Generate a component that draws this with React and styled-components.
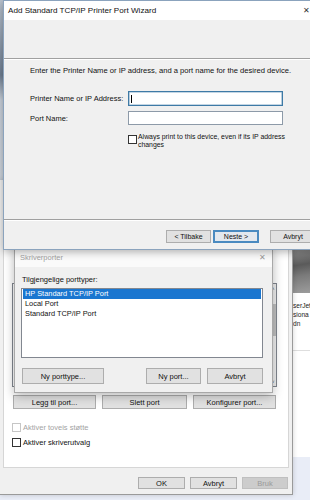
import React from "react";
import styled, { createGlobalStyle, css } from "styled-components";

const Global = createGlobalStyle`
  html, body { margin: 0; padding: 0; }
  body {
    width: 310px;
    height: 500px;
    overflow: hidden;
    font-family: "Liberation Sans", Arial, sans-serif;
    color: #111;
  }
  * { box-sizing: border-box; }
`;

const Desktop = styled.div`
  position: relative;
  width: 310px;
  height: 500px;
  overflow: hidden;
  background: #fff;
`;

/* ---------- background web page ---------- */
const WebPage = styled.div`
  position: absolute;
  inset: 0;
  display: flex;
  flex-direction: column;
`;
const TopBand = styled.div`
  height: 250px;
  background: linear-gradient(180deg, #b9c3cf 0%, #6f7f93 30%, #c8d0da 40%, #d2d8df 100%);
`;
const PhotoRow = styled.div`
  height: 43px;
  display: flex;
  justify-content: flex-end;
`;
const Photo = styled.div`
  width: 17px;
  background: linear-gradient(170deg, #8e8e8e 0%, #5a5a5a 35%, #7b7b7b 60%, #9c9c9c 100%);
`;
const Caption = styled.div`
  margin-top: 8px;
  padding-left: 293px;
  font-size: 6.6px;
  line-height: 9px;
  white-space: nowrap;
  color: #222;
`;
const Rule = styled.div`
  margin-left: 293px;
  margin-top: 22px;
  border-top: 1px solid #dedede;
`;
const Filler = styled.div`
  flex: 1;
`;
const Footer = styled.div`
  height: 43px;
  background: #e9edf7;
`;

/* ---------- shared controls ---------- */
const Button = styled.div`
  display: flex;
  align-items: center;
  justify-content: center;
  width: ${(p) => p.$w}px;
  height: ${(p) => p.$h || 14}px;
  background: ${(p) => (p.$disabled ? "#cccccc" : "#e1e1e1")};
  border: 1px solid ${(p) => (p.$disabled ? "#bfbfbf" : "#adadad")};
  color: ${(p) => (p.$disabled ? "#9a9a9a" : "#111")};
  font-size: ${(p) => p.$fs || 7.5}px;
  white-space: nowrap;
  ${(p) =>
    p.$default &&
    css`
      border: 2px solid #4a8ac0;
      background: #e3e8ee;
    `}
`;

const Box = styled.span`
  display: inline-block;
  flex: none;
  width: 9px;
  height: 9px;
  background: #fff;
  border: 1px solid ${(p) => (p.$disabled ? "#c6c6c6" : "#333")};
`;

/* ---------- properties window (back) ---------- */
const PropsWindow = styled.div`
  position: absolute;
  left: 0;
  top: 180px;
  width: 293px;
  height: 315px;
  background: #f0f0f0;
  border-right: 1px solid #9a9a9a;
  border-bottom: 1px solid #9a9a9a;
  box-shadow: 0 0 5px rgba(0, 0, 0, 0.18);
  padding: 0 3px 0 3px;
  display: flex;
  flex-direction: column;
`;
const TabPage = styled.div`
  height: 288px;
  background: #fff;
  border: 1px solid #d6d6d6;
  padding: 0 11px 0 8px;
  display: flex;
  flex-direction: column;
`;
const PortsList = styled.div`
  margin-top: 102px;
  height: 104px;
  border: 1px solid #828790;
  background: #fff;
  display: flex;
  justify-content: flex-end;
`;
const ScrollBar = styled.div`
  width: 6px;
  background: #f0f0f0;
  display: flex;
  flex-direction: column;
  align-items: center;
  font-size: 5px;
  color: #555;
`;
const Arrow = styled.div`
  height: 9px;
  display: flex;
  align-items: center;
`;
const Thumb = styled.div`
  width: 5px;
  height: 32px;
  margin-top: 11px;
  background: #c2c2c2;
`;
const ScrollGap = styled.div`
  flex: 1;
`;
const PortButtons = styled.div`
  margin-top: 8px;
  margin-left: 1px;
  display: flex;
  gap: 6px;
`;
const CheckRow = styled.div`
  display: flex;
  align-items: center;
  gap: 2px;
  height: 9px;
  margin-top: ${(p) => p.$mt}px;
  font-size: 7.5px;
  color: ${(p) => (p.$disabled ? "#a3a3a3" : "#111")};
  white-space: nowrap;
`;
const DialogButtons = styled.div`
  margin-top: 9px;
  padding-right: 1px;
  display: flex;
  justify-content: flex-end;
  gap: 5px;
`;

/* ---------- Skriverporter dialog ---------- */
const PortsDialog = styled.div`
  position: absolute;
  left: 14px;
  top: 246px;
  width: 259px;
  height: 147px;
  background: #f0f0f0;
  border: 1px solid #a8a8a8;
  box-shadow: 0 3px 10px rgba(0, 0, 0, 0.28);
  display: flex;
  flex-direction: column;
`;
const DialogTitle = styled.div`
  height: 20px;
  flex: none;
  background: #fafafa;
  display: flex;
  align-items: center;
  justify-content: space-between;
  padding: 0 6px 0 5px;
  font-size: 7.5px;
  color: #a2a2a2;
`;
const CloseGlyph = styled.span`
  font-size: ${(p) => p.$fs || 8}px;
  color: ${(p) => p.$c || "#9a9a9a"};
`;
const DialogBody = styled.div`
  flex: 1;
  padding: 0 9px 0 6px;
  display: flex;
  flex-direction: column;
`;
const Label = styled.div`
  margin-top: 8px;
  height: 9px;
  display: flex;
  align-items: center;
  font-size: 7.5px;
  padding-left: 1px;
`;
const TypeList = styled.div`
  margin-top: 4px;
  height: 70px;
  border: 1px solid #828790;
  background: #fff;
  padding: 0 1px;
`;
const TypeItem = styled.div`
  height: 9.7px;
  display: flex;
  align-items: center;
  padding-left: 2px;
  font-size: 7.4px;
  white-space: nowrap;
  ${(p) =>
    p.$selected &&
    css`
      background: #1a76d0;
      color: #fff;
    `}
`;
const TypeButtons = styled.div`
  margin-top: 10px;
  display: flex;
  gap: 6px;
  padding-left: 1px;
`;
const Spacer = styled.div`
  flex: 1;
`;

/* ---------- Wizard (front) ---------- */
const Wizard = styled.div`
  position: absolute;
  left: 3px;
  top: 0;
  width: 318px;
  height: 250px;
  background: #f0f0f0;
  border: 1px solid #8ba3bd;
  box-shadow: 0 2px 8px rgba(0, 0, 0, 0.3);
  display: flex;
  flex-direction: column;
`;
const WizardTitle = styled.div`
  height: 19px;
  flex: none;
  background: #fff;
  display: flex;
  align-items: center;
  justify-content: space-between;
  padding: 0 10px 0 4px;
  font-size: 8.1px;
  color: #111;
`;
const WizardHeader = styled.div`
  height: 39px;
  flex: none;
  border-bottom: 1px solid #a0a0a0;
  box-shadow: 0 1px 0 #fff;
`;
const WizardBody = styled.div`
  flex: 1;
  padding: 6px 0 0 26px;
  display: flex;
  flex-direction: column;
  font-size: 7.5px;
`;
const Intro = styled.div`
  height: 10px;
  display: flex;
  align-items: center;
  white-space: nowrap;
  font-size: 7.6px;
`;
const Form = styled.div`
  margin-top: 16px;
  display: grid;
  grid-template-columns: 98px 155px;
  row-gap: 5px;
  align-items: center;
`;
const FieldLabel = styled.div`
  white-space: nowrap;
`;
const Input = styled.div`
  height: ${(p) => p.$h}px;
  background: #fff;
  border: 1px solid ${(p) => (p.$focused ? "#3e7aa6" : "#8d9aa8")};
  display: flex;
  align-items: center;
  padding-left: 2px;
  ${(p) =>
    p.$focused &&
    css`
      box-shadow: inset 0 0 0 0.6px rgba(62, 122, 166, 0.6);
    `}
`;
const Caret = styled.span`
  width: 1px;
  height: 8px;
  background: #000;
`;
const AlwaysRow = styled.div`
  margin: 10px 0 0 98px;
  display: flex;
  align-items: flex-start;
  gap: 1px;
`;
const AlwaysText = styled.div`
  line-height: 8px;
  margin-top: -2px;
  font-size: 6.9px;
`;
const WizardFooter = styled.div`
  height: 30px;
  flex: none;
  border-top: 1px solid #a0a0a0;
  box-shadow: inset 0 1px 0 #fff;
  padding: 10px 0 0 162px;
  display: flex;
  gap: 2px;
`;
const FooterGap = styled.div`
  width: 7px;
`;

export default function App() {
  return (
    <>
      <Global />
      <Desktop>
        <WebPage>
          <TopBand />
          <PhotoRow>
            <Photo />
          </PhotoRow>
          <Caption>
            serJet
            <br />
            siona
            <br />
            dn
          </Caption>
          <Rule />
          <Filler />
          <Footer />
        </WebPage>

        <PropsWindow>
          <TabPage>
            <PortsList>
              <ScrollBar>
                <Arrow>˄</Arrow>
                <Thumb />
                <ScrollGap />
                <Arrow>˅</Arrow>
              </ScrollBar>
            </PortsList>
            <PortButtons>
              <Button $w={83}>Legg til port...</Button>
              <Button $w={85}>Slett port</Button>
              <Button $w={83}>Konfigurer port...</Button>
            </PortButtons>
            <CheckRow $mt={14} $disabled>
              <Box $disabled />
              Aktiver toveis støtte
            </CheckRow>
            <CheckRow $mt={6}>
              <Box />
              Aktiver skriverutvalg
            </CheckRow>
          </TabPage>
          <DialogButtons>
            <Button $w={47} $h={12}>OK</Button>
            <Button $w={47} $h={12}>Avbryt</Button>
            <Button $w={46} $h={12} $disabled>Bruk</Button>
          </DialogButtons>
        </PropsWindow>

        <PortsDialog>
          <DialogTitle>
            <span>Skriverporter</span>
            <CloseGlyph>✕</CloseGlyph>
          </DialogTitle>
          <DialogBody>
            <Label>Tilgjengelige porttyper:</Label>
            <TypeList>
              <TypeItem $selected>HP Standard TCP/IP Port</TypeItem>
              <TypeItem>Local Port</TypeItem>
              <TypeItem>Standard TCP/IP Port</TypeItem>
            </TypeList>
            <TypeButtons>
              <Button $w={82} $h={16}>Ny porttype...</Button>
              <Spacer />
              <Button $w={55} $h={16}>Ny port...</Button>
              <Button $w={56} $h={16}>Avbryt</Button>
            </TypeButtons>
          </DialogBody>
        </PortsDialog>

        <Wizard>
          <WizardTitle>
            <span>Add Standard TCP/IP Printer Port Wizard</span>
            <CloseGlyph $c="#333" $fs={8}>✕</CloseGlyph>
          </WizardTitle>
          <WizardHeader />
          <WizardBody>
            <Intro>
              Enter the Printer Name or IP address, and a port name for the desired device.
            </Intro>
            <Form>
              <FieldLabel>Printer Name or IP Address:</FieldLabel>
              <Input $h={15} $focused>
                <Caret />
              </Input>
              <FieldLabel>Port Name:</FieldLabel>
              <Input $h={14} />
            </Form>
            <AlwaysRow>
              <Box />
              <AlwaysText>
                Always print to this device, even if its IP address
                <br />
                changes
              </AlwaysText>
            </AlwaysRow>
          </WizardBody>
          <WizardFooter>
            <Button $w={45} $h={13} $fs={7}>&lt; Tilbake</Button>
            <Button $w={46} $h={13} $fs={7} $default>Neste &gt;</Button>
            <FooterGap />
            <Button $w={46} $h={13} $fs={7}>Avbryt</Button>
          </WizardFooter>
        </Wizard>
      </Desktop>
    </>
  );
}
